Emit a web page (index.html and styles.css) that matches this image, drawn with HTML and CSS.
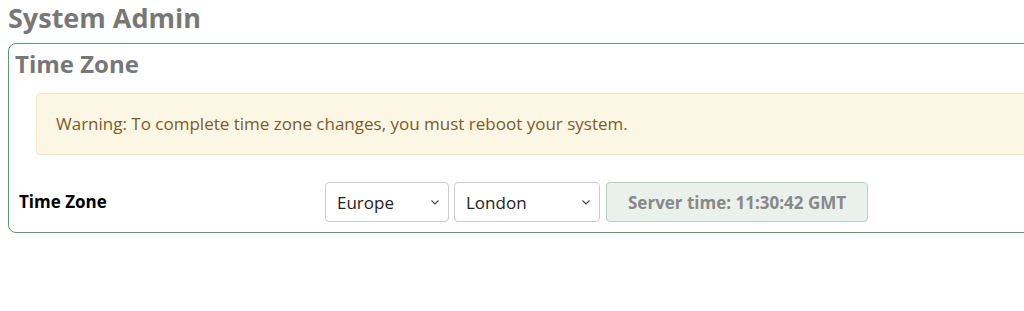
FILE: index.html
```html
<!DOCTYPE html>
<html lang="en">
<head>
<meta charset="utf-8" />
<title>System Admin</title>
<link rel="stylesheet" href="styles.css">
</head>
<body>
<h1 class="page_title">System Admin</h1>
<!-- S 时区 -->
<div class="mode_panel">
	<h2 class="panel_title">Time Zone</h2>
	<div class="alert_warning">Warning: To complete time zone changes, you must reboot your system.</div>
	<div class="form_row">
		<label class="row_label">Time Zone</label>
		<div class="row_ctrl">
			<select class="sel sel_region"><option>Europe</option></select>
			<select class="sel sel_city"><option>London</option></select>
			<button class="bt_time" disabled>Server time: 11:30:42 GMT</button>
		</div>
	</div>
</div>
<!-- E 时区 -->
</body>
</html>
```

FILE: styles.css
```css
html,body{overflow:hidden;}
body{margin:0;padding:0 8px;font-family:"Open Sans","Noto Sans",sans-serif;font-size:17px;line-height:1.5;color:#000;background:#fff;}

.page_title{margin:0;padding:0;height:43px;font-size:27px;line-height:36px;font-weight:700;color:#777;}

/* S 面板 */
.mode_panel{width:1100px;height:188px;border:1px solid #5e9676;border-radius:8px;}
.mode_panel .panel_title{margin:0;padding:4px 0 0 6px;height:45px;font-size:24px;line-height:32px;font-weight:700;color:#777;}
.alert_warning{margin:0 0 0 27px;padding:18px 19px;border:1px solid #f6e6c3;border-radius:4px;background:#fbf7e4;color:#7b5b2c;font-size:17px;line-height:24px;}
/* E 面板 */

.form_row{display:flex;align-items:center;margin-top:27px;padding-left:10px;}
.form_row .row_label{width:306px;font-weight:700;font-size:17px;}
.form_row .row_ctrl{display:flex;align-items:center;gap:5px;}

.sel{height:40px;padding:0 8px 0 11px;border:1px solid #ccc;border-radius:4px;background:#fff;font-family:inherit;font-size:17px;color:#222;appearance:none;-webkit-appearance:none;background-image:url("data:image/svg+xml,%3Csvg xmlns='http://www.w3.org/2000/svg' width='8' height='5'%3E%3Cpath d='M.5.5l3.5 3.5 3.5-3.5' fill='none' stroke='%23444' stroke-width='1.1'/%3E%3C/svg%3E");background-repeat:no-repeat;background-position:right 9px center;}
.sel_region{width:124px;}
.sel_city{width:146px;}

.bt_time{height:40px;padding:0 21px;margin-left:1px;border:1px solid #b9d1c2;border-radius:4px;background:#eaf0ec;color:#888;font-family:inherit;font-size:17px;font-weight:700;}
```
